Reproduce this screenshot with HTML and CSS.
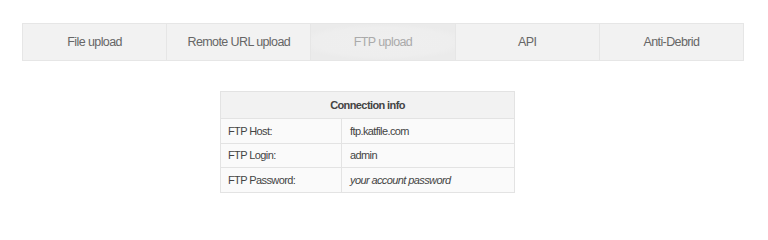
FILE: index.html
```html
<!DOCTYPE html>
<html lang="en">
<head>
  <meta charset="UTF-8">
  <title>FTP upload</title>
  <link rel="stylesheet" href="styles.css">
</head>
<body>
  <!-- upload tabs -->
  <div class="tabs">
    <a class="tab">File upload</a>
    <a class="tab">Remote URL upload</a>
    <a class="tab active">FTP upload</a>
    <a class="tab">API</a>
    <a class="tab">Anti-Debrid</a>
  </div>

  <!-- ftp info -->
  <table class="info">
    <tr>
      <th colspan="2">Connection info</th>
    </tr>
    <tr>
      <td class="label">FTP Host:</td>
      <td>ftp.katfile.com</td>
    </tr>
    <tr>
      <td class="label">FTP Login:</td>
      <td>admin</td>
    </tr>
    <tr>
      <td class="label">FTP Password:</td>
      <td><i>your account password</i></td>
    </tr>
  </table>
</body>
</html>
```

FILE: styles.css
```css
body {
  font-family: "Liberation Sans", Arial, sans-serif;
  margin: 0;
  padding: 23px 24px 0 22px;
  background: #fff;
  color: #444;
}

.tabs {
  display: flex;
  border: 1px solid #e6e6e6;
  background: #f2f2f2;
}

.tab {
  flex: 1;
  height: 36px;
  display: flex;
  align-items: center;
  justify-content: center;
  font-size: 12.5px;
  letter-spacing: -0.6px;
  color: #666;
  border-left: 1px solid #e6e6e6;
  cursor: pointer;
}

.tab:first-child {
  border-left: none;
}

.tab.active {
  color: #aaa;
  background: radial-gradient(ellipse 60% 50% at 50% 50%, #efefef 0%, #eeeeee 80%, #ebebeb 100%);
}

.info {
  border-collapse: collapse;
  margin: 30px 0 0 198px;
  width: 295px;
  font-size: 11px;
  letter-spacing: -0.6px;
}

.info th {
  background: #f2f2f2;
  border: 1px solid #e3e3e3;
  height: 24px;
  font-weight: bold;
  color: #444;
}

.info td {
  background: #fafafa;
  border: 1px solid #e3e3e3;
  height: 23.5px;
  padding: 0 8px;
  color: #444;
}

.info td.label {
  width: 105px;
  padding-left: 7px;
}
```
